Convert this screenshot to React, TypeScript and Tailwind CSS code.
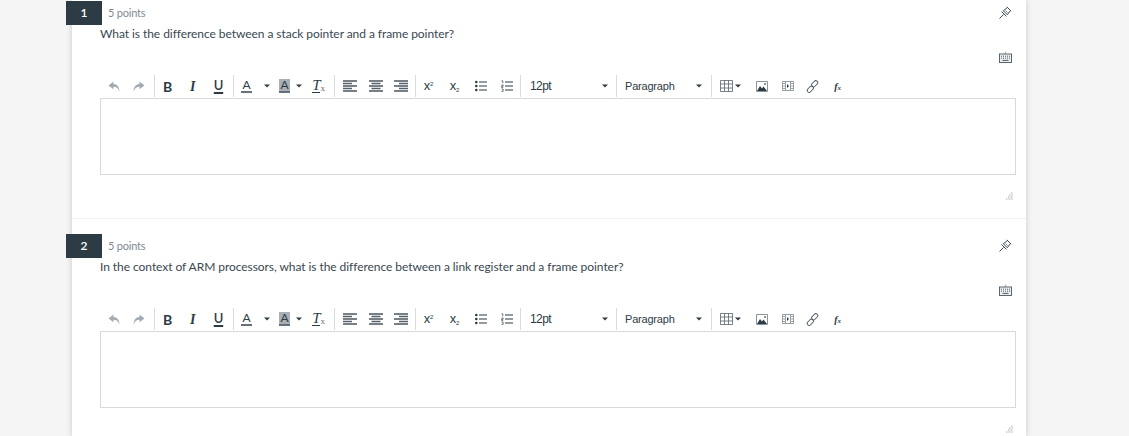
import React from "react";

const Sep = ({ className = "" }: { className?: string }) => <div className={`w-px h-[22px] bg-[#d9dcde] shrink-0 ${className}`} />;

const Caret = ({ className = "" }: { className?: string }) => (
  <svg width="6" height="4" viewBox="0 0 6 4" className={`shrink-0 ${className}`}>
    <path d="M0 0.5h6L3 3.5z" fill="#2d3b45" />
  </svg>
);

const Btn = ({ children, className = "" }: { children: React.ReactNode; className?: string }) => (
  <div className={`w-[25px] h-[22px] shrink-0 flex items-center justify-center text-[#2d3b45] ${className}`}>{children}</div>
);

const Undo = ({ flip = false }: { flip?: boolean }) => (
  <svg width="12" height="11" viewBox="0 0 11 10" className={flip ? "-scale-x-100" : ""}>
    <path d="M5 0.5L0.5 4 5 7.5V5.3C7.6 5.3 9.2 6.3 10.5 9.5 10.4 5.4 8.4 2.9 5 2.7z" fill="#a3abb0" />
  </svg>
);

const AlignIcon = ({ kind }: { kind: "l" | "c" | "r" }) => {
  const short = kind === "l" ? "M0 3.5h9M0 8.5h9" : kind === "c" ? "M2.5 3.5h9M2.5 8.5h9" : "M5 3.5h9M5 8.5h9";
  return (
    <svg width="14" height="12" viewBox="0 0 14 12">
      <path d="M0 1h14M0 6h14M0 11h14" stroke="#2d3b45" strokeWidth="1.4" opacity="0.85" />
      <path d={short} stroke="#2d3b45" strokeWidth="1.4" opacity="0.8" />
    </svg>
  );
};

const Bullets = ({ numbered = false }: { numbered?: boolean }) => (
  <svg width="12" height="12" viewBox="0 0 12 12">
    <path d="M4 2h8M4 6h8M4 10h8" stroke="#2d3b45" strokeWidth="1.2" />
    {numbered ? (
      <path d="M0.5 0.8h1.3v2.4M0.5 5h1.6v1.2H.6v1.2h1.6M.5 9h1.6v2.4H.5" stroke="#2d3b45" strokeWidth="0.7" fill="none" />
    ) : (
      <>
        <circle cx="1.3" cy="2" r="1.3" fill="#2d3b45" />
        <circle cx="1.3" cy="6" r="1.3" fill="#2d3b45" />
        <circle cx="1.3" cy="10" r="1.3" fill="#2d3b45" />
      </>
    )}
  </svg>
);

const TableIcon = () => (
  <svg width="13" height="12" viewBox="0 0 13 12">
    <path d="M.5.5h12v11H.5zM.5 4h12M.5 8h12M4.5 .5v11M8.5 .5v11" stroke="#56626b" strokeWidth="0.8" fill="none" />
  </svg>
);

const ImageIcon = () => (
  <svg width="12" height="11" viewBox="0 0 12 11">
    <path d="M.5.5h11v10H.5z" stroke="#8a949b" fill="none" />
    <path d="M1 10l3-5 2 2.5L7.5 5.5 11 10z" fill="#2d3b45" />
    <circle cx="9" cy="3" r="1" fill="#66727b" />
  </svg>
);

const MediaIcon = () => (
  <svg width="12" height="10" viewBox="0 0 12 10">
    <path d="M.5.5h11v9H.5zM3.5.5v9M8.5.5v9" stroke="#8a949b" strokeWidth="0.9" fill="none" />
    <path d="M5 3l2 2-2 2z" fill="#2d3b45" />
    <path d="M1 2.5h2M1 5h2M1 7.5h2M9 2.5h2M9 5h2M9 7.5h2" stroke="#8a949b" strokeWidth="0.8" />
  </svg>
);

const LinkIcon = () => (
  <svg width="13" height="13" viewBox="0 0 12 12" fill="none" stroke="#4a565f" strokeWidth="0.9">
    <rect x="6.2" y="0.2" width="3.6" height="6.5" rx="1.8" transform="rotate(45 8 3.5)" />
    <rect x="2.2" y="5.3" width="3.6" height="6.5" rx="1.8" transform="rotate(45 4 8.5)" />
  </svg>
);

const PinIcon = () => (
  <svg width="13" height="13" viewBox="0 0 13 13" fill="none" stroke="#3d4a53" strokeWidth="1">
    <path d="M0.5 12.5L4.5 8.5" />
    <path d="M2.6 5.6L7.4 10.4M7.8 0.8L12.2 5.2M8.4 1.6L4.3 4.7 8.3 8.7 11.4 4.6" />
    <path d="M6.5 4.5L8.5 6.5" strokeWidth="0.7" />
  </svg>
);

const KeyboardIcon = () => (
  <svg width="13" height="12" viewBox="0 0 13 12" fill="none">
    <path d="M6 3L7 .5" stroke="#8a949b" strokeWidth="0.8" />
    <rect x="0.5" y="3" width="12" height="8.5" stroke="#4a565f" strokeWidth="0.9" fill="#eef0f1" />
    <path d="M2 5.2h9M2 7.2h9" stroke="#3d4a53" strokeWidth="0.9" strokeDasharray="1 1" />
    <path d="M3.5 9.4h6" stroke="#3d4a53" strokeWidth="0.9" />
  </svg>
);

const ResizeHandle = () => (
  <svg width="8" height="8" viewBox="0 0 8 8">
    <path d="M5 1h2M3 3h4M2 5h5M0 7h7" stroke="#a9a6b8" strokeWidth="1" strokeDasharray="1 0.6" />
  </svg>
);

const Toolbar = () => (
  <div className="h-[24px] flex items-center pl-px font-['Liberation_Sans',sans-serif] text-[11px] tracking-[-0.2px] text-[#2d3b45]">
    <Btn><Undo /></Btn>
    <Btn><Undo flip /></Btn>
    <Sep className="ml-[3px]" />
    <Btn className="text-[14px] font-bold font-['Lato',sans-serif]">B</Btn>
    <Btn className="text-[14px] font-bold italic font-['Liberation_Serif',serif]">I</Btn>
    <Btn className="ml-px text-[13px] font-['Lato',sans-serif] font-semibold underline decoration-2 underline-offset-2">U</Btn>
    <Sep className="ml-[2px]" />
    <Btn className="font-['Lato',sans-serif] text-[12px] w-[24px]"><span className="border-b-2 border-[#66727b] leading-[12px] px-[2px]">A</span></Btn>
    <Caret className="ml-[5px]" />
    <Btn className="ml-[2px] font-['Lato',sans-serif] text-[12px]"><span className="bg-[#a9b0b5] border-b-2 border-[#66727b] leading-[12px] px-[2px]">A</span></Btn>
    <Caret className="-ml-[1px]" />
    <Btn className="ml-[2px] font-['Liberation_Serif',serif] italic text-[15px] w-[29px]"><span className="border-b border-[#2d3b45] leading-[13px]">T</span><span className="text-[9px] not-italic mt-[6px] text-[#66727b]">x</span></Btn>
    <Sep className="ml-[1px]" />
    <Btn className="ml-[2px]"><AlignIcon kind="l" /></Btn>
    <Btn className="ml-px"><AlignIcon kind="c" /></Btn>
    <Btn><AlignIcon kind="r" /></Btn>
    <Sep className="ml-[2px]" />
    <Btn className="text-[13px]"><span>x<sup className="text-[6px] -top-[4px]">2</sup></span></Btn>
    <Btn className="ml-px text-[13px]"><span>x<sub className="text-[6px] -bottom-[2px]">2</sub></span></Btn>
    <Btn className="ml-px"><Bullets /></Btn>
    <Btn className="ml-px"><Bullets numbered /></Btn>
    <Sep className="ml-px" />
    <div className="w-[95px] pl-[9px] flex items-center justify-between pr-[8px] shrink-0 text-[12px] tracking-[-0.6px]">12pt<Caret /></div>
    <Sep />
    <div className="w-[94px] pl-[8px] flex items-center justify-between pr-[9px] shrink-0">Paragraph<Caret /></div>
    <Sep />
    <div className="w-[31px] h-[22px] pl-[8px] flex items-center gap-[2px] shrink-0"><TableIcon /><Caret /></div>
    <Btn className="ml-[6px]"><ImageIcon /></Btn>
    <Btn className="ml-px"><MediaIcon /></Btn>
    <Btn><LinkIcon /></Btn>
    <Btn className="text-[10px] font-bold italic font-['Liberation_Serif',serif]"><span>f<span className="text-[7px]">x</span></span></Btn>
  </div>
);

const Question = ({ n, text }: { n: number; text: string }) => (
  <section className="h-[233px]">
    <div className="flex h-[25px] pt-px">
      <div className="-ml-[6px] w-[36px] h-[24px] bg-[#2d3b45] text-white text-[12px] font-semibold flex items-center justify-center">{n}</div>
      <div className="ml-[6px] text-[11px] leading-[24px] text-[#7f8a92] tracking-[-0.2px]">5 points</div>
      <div className="ml-auto mr-[14px] mt-[5px]"><PinIcon /></div>
    </div>
    <p className="pl-[28px] pt-px h-[16px] text-[12px] leading-[16px] tracking-[-0.06px] text-[#3a4750]">{text}</p>
    <div className="h-[24px] mt-[10px] flex justify-end pr-[14px]"><KeyboardIcon /></div>
    <div className="ml-[28px] mr-[10px] mt-[-1px]">
      <Toolbar />
      <div className="h-[77px] border border-[#d7dadc] bg-white" />
      <div className="flex justify-end pr-[2px] mt-[17px]"><ResizeHandle /></div>
    </div>
    <div className="h-px bg-[#f1f1f1] mt-[18px]" />
  </section>
);

export default function App() {
  return (
    <div className="h-[436px] overflow-hidden bg-[#f5f5f5] font-['Lato',sans-serif]">
      <div className="ml-[72px] w-[954px] h-[436px] bg-white shadow-[0_0_6px_rgba(0,0,0,0.18)]">
        <Question n={1} text="What is the difference between a stack pointer and a frame pointer?" />
        <Question n={2} text="In the context of ARM processors, what is the difference between a link register and a frame pointer?" />
      </div>
    </div>
  );
}
